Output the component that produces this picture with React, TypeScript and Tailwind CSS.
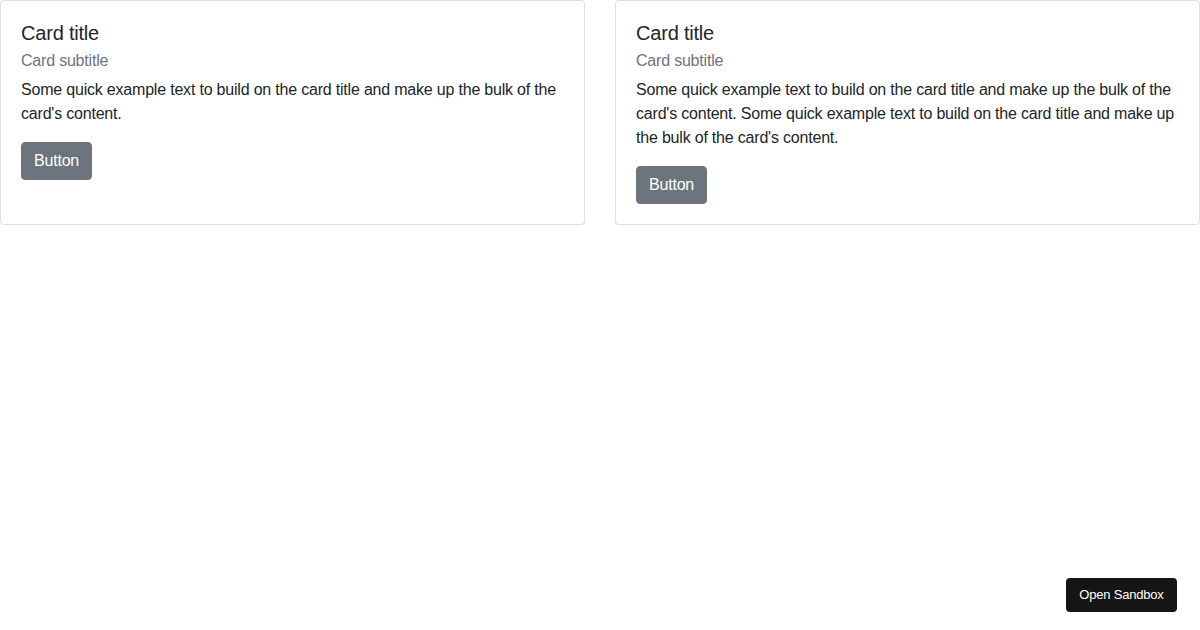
import React from "react";

const font = { fontFamily: '"Liberation Sans", Arial, sans-serif' };

function Card({ text }: { text: string }) {
  return (
    <div className="flex-1 rounded-[4px] border border-[rgba(0,0,0,0.125)] bg-white">
      <div className="p-5">
        <h5 className="mb-3 text-[20px] leading-[24px] font-normal text-[#212529]">Card title</h5>
        <h6 className="-mt-[6px] mb-2 text-[16px] leading-[19.2px] font-normal text-[#6c757d]">Card subtitle</h6>
        <p className="mb-4 text-[16px] leading-[24px] text-[#212529]">{text}</p>
        <button className="rounded-[4px] bg-[#6c757d] px-3 py-[6px] text-[16px] leading-[24px] text-white border border-[#6c757d]">
          Button
        </button>
      </div>
    </div>
  );
}

export default function App() {
  const t = "Some quick example text to build on the card title and make up the bulk of the card's content.";
  return (
    <div className="relative h-[630px] w-[1200px] bg-white tracking-[-0.2px]" style={font}>
      <div className="flex items-stretch gap-[30px]">
        <Card text={t} />
        <Card text={t + " " + t} />
      </div>
      <button className="absolute bottom-[18px] right-[23px] h-[34px] w-[111px] rounded-[4px] bg-[#151515] text-[13px] text-white">
        Open Sandbox
      </button>
    </div>
  );
}
